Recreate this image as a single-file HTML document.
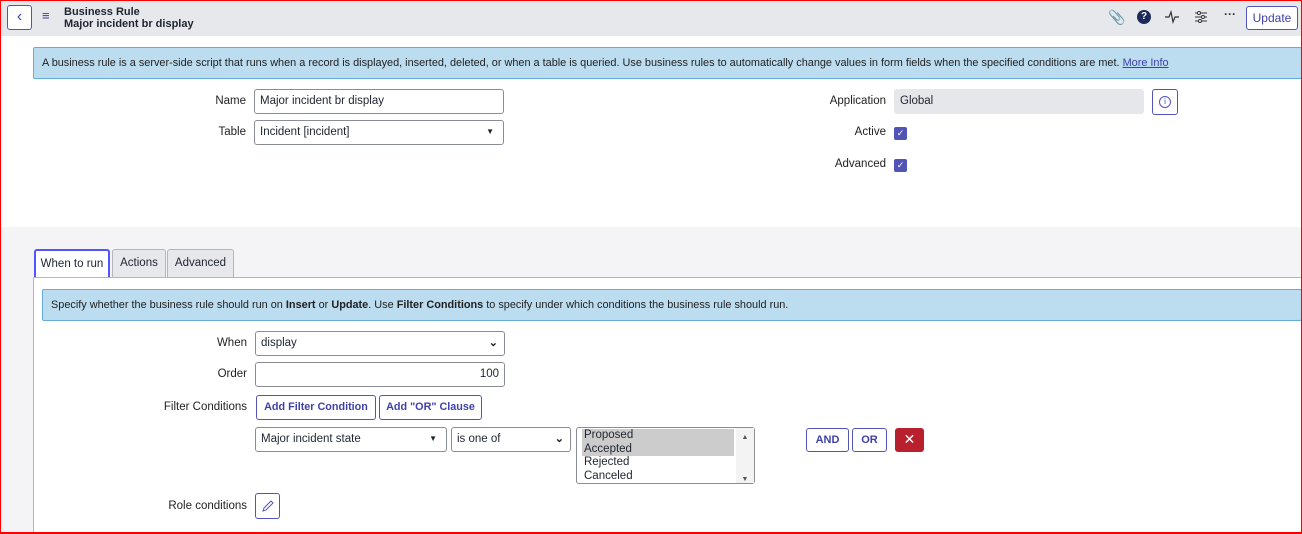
<!DOCTYPE html>
<html><head><style>
*{box-sizing:border-box;margin:0;padding:0}
body{width:1302px;height:534px;overflow:hidden;font-family:"Liberation Sans",sans-serif;font-size:11.5px;color:#1f2430;background:#fff;position:relative}
.abs{position:absolute}
.frame{position:absolute;left:0;top:0;width:1302px;height:534px;border:1px solid #f00;border-bottom-width:2px;pointer-events:none;z-index:9}
.hdr{left:0;top:0;width:1302px;height:36px;background:#e7e8ec}
.btn{border:1px solid #5254b8;border-radius:3px;background:#fff;color:#3f41a8;text-align:center}
.lbl{text-align:right;font-size:11.5px;color:#222}
.inp{border:1px solid #8a8d96;border-radius:3px;background:#fff;padding:0 5px;font-size:11.5px;line-height:22px}
.info{background:#bcdcf0;border:1px solid #64acdb;border-radius:2px;font-size:10.9px;padding-left:8px;color:#222;white-space:nowrap;overflow:hidden}
.cb{width:13px;height:13px;background:#5254b8;border-radius:2px;color:#fff;font-size:9px;line-height:13px;text-align:center}
.tab{top:249px;height:28px;border:1px solid #b4b6bc;border-bottom:none;background:#e7e8ec;border-radius:3px 3px 0 0;line-height:27px;text-align:center;font-size:11.5px}
</style></head><body>
<div class="abs hdr"></div>
<div class="abs btn" style="left:7px;top:5px;width:25px;height:25px;line-height:22px;font-size:16px">&#8249;</div>
<div class="abs" style="left:42px;top:8px;font-size:13px;color:#3a3f8a">&#8801;</div>
<div class="abs" style="left:64px;top:6px;font-size:11px;line-height:12px;color:#1f2430;font-weight:bold">Business Rule<br>Major incident br display</div>
<div class="abs" style="left:1108px;top:9px;font-size:14px;color:#777">&#128206;</div>
<div class="abs" style="left:1137px;top:10px;width:14px;height:14px;border-radius:50%;background:#1d2a5a;color:#fff;font-size:10px;font-weight:bold;text-align:center;line-height:14px">?</div>
<svg class="abs" style="left:1165px;top:10px" width="14" height="14"><path d="M0 7h4l2-5 2 10 2-5h4" stroke="#333" fill="none" stroke-width="1.2"/></svg>
<svg class="abs" style="left:1194px;top:10px" width="14" height="14"><path d="M1 3h12M1 7h12M1 11h12" stroke="#333"/><circle cx="5" cy="3" r="1.5" fill="#fff" stroke="#333"/><circle cx="9" cy="7" r="1.5" fill="#fff" stroke="#333"/><circle cx="6" cy="11" r="1.5" fill="#fff" stroke="#333"/></svg>
<div class="abs" style="left:1224px;top:7px;font-size:12px;color:#333;font-weight:bold">&middot;&middot;&middot;</div>
<div class="abs btn" style="left:1246px;top:6px;width:52px;height:24px;line-height:22px;font-size:12px">Update</div>

<div class="abs info" style="left:33px;top:47px;width:1269px;height:32px;line-height:30px">A business rule is a server-side script that runs when a record is displayed, inserted, deleted, or when a table is queried. Use business rules to automatically change values in form fields when the specified conditions are met. <span style="color:#3f41a8;text-decoration:underline">More Info</span></div>

<div class="abs lbl" style="left:150px;top:95px;width:96px">Name</div>
<div class="abs inp" style="left:254px;top:89px;width:250px;height:25px">Major incident br display</div>
<div class="abs lbl" style="left:150px;top:126px;width:96px">Table</div>
<div class="abs inp" style="left:254px;top:120px;width:250px;height:25px">Incident [incident]<span style="position:absolute;right:9px;top:0;font-size:8px">&#9660;</span></div>

<div class="abs lbl" style="left:780px;top:95px;width:106px">Application</div>
<div class="abs" style="left:894px;top:89px;width:250px;height:25px;background:#e6e7ea;border-radius:3px;padding-left:6px;line-height:25px">Global</div>
<div class="abs btn" style="left:1152px;top:89px;width:26px;height:26px"><div style="margin:6px auto;width:12px;height:12px;border:1px solid #5254b8;border-radius:50%;font-size:8px;line-height:10px">i</div></div>
<div class="abs lbl" style="left:780px;top:126px;width:106px">Active</div>
<div class="abs cb" style="left:894px;top:127px">&#10003;</div>
<div class="abs lbl" style="left:780px;top:158px;width:106px">Advanced</div>
<div class="abs cb" style="left:894px;top:159px">&#10003;</div>

<div class="abs" style="left:0;top:227px;width:1302px;height:307px;background:#f4f4f6"></div>
<div class="abs tab" style="left:34px;width:76px;background:#fff;border:2px solid #5254ff;border-bottom:none;height:29px">When to run</div>
<div class="abs tab" style="left:112px;width:54px">Actions</div>
<div class="abs tab" style="left:167px;width:67px">Advanced</div>
<div class="abs" style="left:33px;top:277px;width:1269px;height:257px;background:#fff;border-top:1px solid #b4b6bc;border-left:1px solid #b4b6bc"></div>

<div class="abs info" style="left:42px;top:289px;width:1260px;height:32px;line-height:30px">Specify whether the business rule should run on <b style="font-weight:600">Insert</b> or <b style="font-weight:600">Update</b>. Use <b style="font-weight:600">Filter Conditions</b> to specify under which conditions the business rule should run.</div>

<div class="abs lbl" style="left:150px;top:337px;width:97px">When</div>
<div class="abs inp" style="left:255px;top:331px;width:250px;height:25px">display<span style="position:absolute;right:6px;top:0;font-size:11px;font-weight:bold">&#8964;</span></div>
<div class="abs lbl" style="left:150px;top:368px;width:97px">Order</div>
<div class="abs inp" style="left:255px;top:362px;width:250px;height:25px;text-align:right">100</div>
<div class="abs lbl" style="left:140px;top:401px;width:107px">Filter Conditions</div>
<div class="abs btn" style="left:256px;top:395px;width:120px;height:25px;line-height:23px;font-weight:bold;font-size:10.8px">Add Filter Condition</div>
<div class="abs btn" style="left:379px;top:395px;width:103px;height:25px;line-height:23px;font-weight:bold;font-size:10.8px">Add "OR" Clause</div>

<div class="abs inp" style="left:255px;top:427px;width:192px;height:25px">Major incident state<span style="position:absolute;right:9px;top:0;font-size:8px">&#9660;</span></div>
<div class="abs inp" style="left:451px;top:427px;width:120px;height:25px">is one of<span style="position:absolute;right:6px;top:0;font-size:11px;font-weight:bold">&#8964;</span></div>
<div class="abs" style="left:576px;top:427px;width:179px;height:57px;border:1px solid #8a8d96;border-radius:3px;background:#fff;font-size:11.5px;line-height:13.5px">
<div style="position:absolute;left:5px;top:1px;width:152px;height:27px;background:#cccccc"></div>
<div style="position:absolute;left:7px;top:1px">Proposed<br>Accepted<br>Rejected<br>Canceled</div>
<div style="position:absolute;right:0;top:0;width:18px;height:55px;background:#f3f3f3;font-size:7px;text-align:center;color:#555"><div style="margin-top:3px">&#9650;</div><div style="margin-top:28px">&#9660;</div></div>
</div>
<div class="abs btn" style="left:806px;top:428px;width:43px;height:24px;line-height:22px;font-weight:bold;font-size:11px">AND</div>
<div class="abs btn" style="left:852px;top:428px;width:35px;height:24px;line-height:22px;font-weight:bold;font-size:11px">OR</div>
<div class="abs" style="left:895px;top:428px;width:29px;height:24px;background:#b8202e;border-radius:3px;color:#fff;text-align:center;line-height:22px;font-size:14px">&#10005;</div>

<div class="abs lbl" style="left:140px;top:500px;width:107px">Role conditions</div>
<div class="abs btn" style="left:255px;top:493px;width:25px;height:26px"><svg width="23" height="24"><path d="M7 17l1-3 7-7 2 2-7 7z" stroke="#5254b8" fill="none"/></svg></div>

<div class="frame"></div>
</body></html>
